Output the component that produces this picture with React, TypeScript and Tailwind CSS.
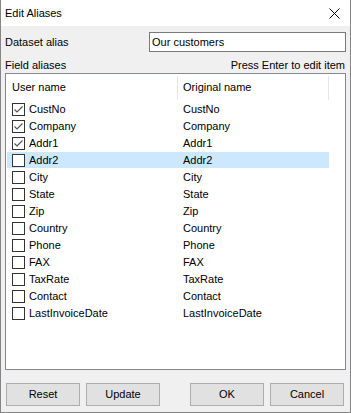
const fields = [
  { name: "CustNo", checked: true },
  { name: "Company", checked: true },
  { name: "Addr1", checked: true },
  { name: "Addr2", checked: false, selected: true },
  { name: "City", checked: false },
  { name: "State", checked: false },
  { name: "Zip", checked: false },
  { name: "Country", checked: false },
  { name: "Phone", checked: false },
  { name: "FAX", checked: false },
  { name: "TaxRate", checked: false },
  { name: "Contact", checked: false },
  { name: "LastInvoiceDate", checked: false },
];

function CheckBox({ checked }: { checked: boolean }) {
  return (
    <div className="w-[13px] h-[13px] border border-[#333333] bg-white flex items-center justify-center shrink-0">
      {checked && (
        <svg width="11" height="11" viewBox="0 0 11 11">
          <polyline points="1.5,5.5 4,8 9.5,2.5" fill="none" stroke="#555555" strokeWidth="1.2" />
        </svg>
      )}
    </div>
  );
}

function Button({ label }: { label: string }) {
  return (
    <button className="w-[74px] h-[23px] bg-[#e1e1e1] border border-[#adadad] text-black leading-none">
      {label}
    </button>
  );
}

export default function App() {
  return (
    <div
      className="w-[351px] h-[413px] border-x border-b border-[#858585] bg-[#f0f0f0] text-[11px] text-black flex flex-col"
      style={{ fontFamily: '"Liberation Sans", Arial, sans-serif' }}
    >
      <div className="h-[26px] bg-white flex items-center pl-[4px] pr-[10px] shrink-0">
        <span className="text-[11px]">Edit Aliases</span>
        <svg className="ml-auto" width="11" height="11" viewBox="0 0 11 11">
          <line x1="0.5" y1="0.5" x2="10.5" y2="10.5" stroke="#000" strokeWidth="1" />
          <line x1="10.5" y1="0.5" x2="0.5" y2="10.5" stroke="#000" strokeWidth="1" />
        </svg>
      </div>

      <div className="flex-1 flex flex-col px-[4px] pt-[6px] pb-[6px]">
        <div className="h-[20px] flex items-center">
          <span>Dataset alias</span>
          <div className="ml-auto w-[197px] h-[20px] border border-[#7a7a7a] bg-white flex items-center pl-[2px]">
            Our customers
          </div>
        </div>

        <div className="mt-[6px] h-[14px] flex items-center justify-between leading-[14px]">
          <span>Field aliases</span>
          <span className="pr-[1px]">Press Enter to edit item</span>
        </div>

        <div className="mt-[1px] h-[297px] border border-[#828790] bg-white">
          <div className="h-[27px] flex items-start">
            <div className="w-[171px] h-[27px] flex items-center pl-[6px]">User name</div>
            <div className="mt-[2px] w-px h-[24px] bg-[#e5e5e5]" />
            <div className="w-[150px] h-[27px] flex items-center pl-[5px]">Original name</div>
            <div className="mt-[2px] w-px h-[24px] bg-[#e5e5e5]" />
          </div>
          <div className="pl-[1px]">
            {fields.map((f) => (
              <div
                key={f.name}
                className={`w-[322px] h-[16px] mb-[1px] flex items-center ${f.selected ? "bg-[#cce8ff]" : ""}`}
              >
                <div className="w-[176px] flex items-center pl-[5px]">
                  <CheckBox checked={f.checked} />
                  <span className="ml-[4px]">{f.name}</span>
                </div>
                <span>{f.name}</span>
              </div>
            ))}
          </div>
        </div>

        <div className="mt-[13px] flex justify-between">
          <div className="flex gap-[6px] ml-[1px]">
            <Button label="Reset" />
            <Button label="Update" />
          </div>
          <div className="flex gap-[6px] mr-[2px]">
            <Button label="OK" />
            <Button label="Cancel" />
          </div>
        </div>
      </div>
    </div>
  );
}
